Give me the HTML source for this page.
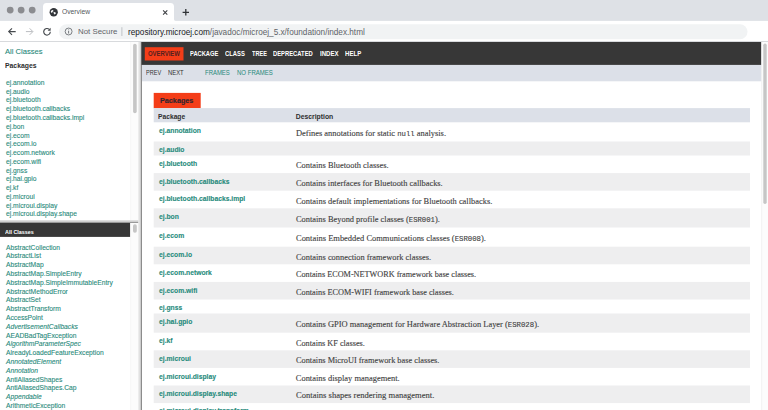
<!DOCTYPE html>
<html><head><meta charset="utf-8"><title>Overview</title>
<style>
*{box-sizing:border-box;margin:0;padding:0}
html,body{width:768px;height:410px;overflow:hidden;background:#fff}
.t{position:absolute;white-space:nowrap;line-height:1;transform-origin:0 0}
code{font-family:"Liberation Mono",monospace;font-size:0.865em}
svg{position:absolute;left:0;top:0}
</style></head><body>
<svg width="768" height="410" viewBox="0 0 768 410">
<rect x="0.00" y="0.00" width="768.00" height="20.90" fill="#dee1e6"/>
<path d="M41 20.9C43 20.9 43 19.4 43 18.4V6.5C43 4 44.5 2.9 46.5 2.9H170.5C172.5 2.9 174 4 174 6.5V18.4C174 19.4 174 20.9 176 20.9Z" fill="#fff"/>
<circle cx="10.2" cy="10.1" r="3.4" fill="#8b8c90"/>
<circle cx="21.15" cy="10.1" r="3.4" fill="#8b8c90"/>
<circle cx="32.2" cy="10.1" r="3.4" fill="#8b8c90"/>
<rect x="59.00" y="24.20" width="688.50" height="15.00" fill="#f1f3f4" rx="7.5"/>
<rect x="0.00" y="41.00" width="768.00" height="1.00" fill="#d8dadd"/>
<rect x="121.50" y="27.20" width="0.80" height="8.80" fill="#b4b7bb"/>
<rect x="130.60" y="42.00" width="7.80" height="178.00" fill="#fcfcfc"/>
<rect x="130.60" y="42.00" width="0.50" height="178.00" fill="#f0f0f0"/>
<rect x="133.10" y="43.70" width="3.60" height="69.50" fill="#c6c6c6" rx="1.8"/>
<rect x="0.00" y="220.00" width="138.40" height="1.70" fill="#e0e0e0"/>
<rect x="0.00" y="221.70" width="138.40" height="1.30" fill="#9a9a9a"/>
<rect x="0.00" y="223.00" width="130.20" height="13.90" fill="#373737"/>
<rect x="130.60" y="223.00" width="7.80" height="187.00" fill="#fcfcfc"/>
<rect x="130.60" y="223.00" width="0.50" height="187.00" fill="#f0f0f0"/>
<rect x="133.00" y="224.30" width="3.80" height="8.50" fill="#c6c6c6" rx="1.8"/>
<rect x="138.40" y="42.00" width="2.30" height="368.00" fill="#e2e2e2"/>
<rect x="140.70" y="42.00" width="1.30" height="368.00" fill="#8c8c8c"/>
<rect x="141.50" y="42.00" width="620.00" height="22.95" fill="#373737"/>
<rect x="144.80" y="47.20" width="38.70" height="13.30" fill="#f43d18"/>
<rect x="142.00" y="64.95" width="619.50" height="16.35" fill="#dce0e8"/>
<rect x="153.70" y="92.90" width="47.00" height="15.30" fill="#f43d18"/>
<rect x="153.70" y="108.10" width="596.30" height="14.20" fill="#dce0e8"/>
<rect x="153.70" y="141.50" width="596.30" height="14.00" fill="#eeeeef"/>
<rect x="153.70" y="173.10" width="596.30" height="17.60" fill="#eeeeef"/>
<rect x="153.70" y="208.30" width="596.30" height="19.20" fill="#eeeeef"/>
<rect x="153.70" y="246.70" width="596.30" height="17.60" fill="#eeeeef"/>
<rect x="153.70" y="281.90" width="596.30" height="17.60" fill="#eeeeef"/>
<rect x="153.70" y="313.50" width="596.30" height="19.20" fill="#eeeeef"/>
<rect x="153.70" y="350.30" width="596.30" height="17.60" fill="#eeeeef"/>
<rect x="153.70" y="385.50" width="596.30" height="17.60" fill="#eeeeef"/>
<rect x="761.50" y="42.00" width="6.50" height="368.00" fill="#fcfcfc"/>
<rect x="761.50" y="42.00" width="0.60" height="368.00" fill="#ececec"/>
<rect x="763.30" y="43.50" width="3.40" height="160.50" fill="#c6c6c6" rx="1.7"/>

<g transform="translate(49.4,7.95) scale(0.5375)"><circle cx="8" cy="8" r="7.7" fill="#33363a"/><path d="M2.6 7.4C2.6 5.4 4 3.8 5.6 3.6L7.4 4.6L7.2 6.4L5.6 7L5.4 8.6L3.6 9Z M8.2 7.6L10.6 8L12.2 9.6L11 11.4L9.2 12.2L8.6 10.4L7.6 9.2Z" fill="#fff"/></g>
<path transform="translate(162.2,9.5)" d="M0.9 0.9L5.1 5.1M5.1 0.9L0.9 5.1" stroke="#3a3d41" stroke-width="1.05" fill="none"/>
<path transform="translate(182.3,8.8)" d="M3.5 0.3V6.7M0.3 3.5H6.7" stroke="#303336" stroke-width="1.3" fill="none"/>
<path transform="translate(8,27.6)" d="M7.7 4H1M4 0.7L0.7 4L4 7.3" stroke="#464a4e" stroke-width="1.1" fill="none"/>
<path transform="translate(25.6,27.6)" d="M0.3 4H7M4 0.7L7.3 4L4 7.3" stroke="#babcc0" stroke-width="1" fill="none"/>
<g transform="translate(42.6,27.2)"><path d="M7.7 4.6A3.3 3.3 0 1 1 6.7 2.2" stroke="#464a4e" stroke-width="1.15" fill="none"/><path d="M8 0.6V3.6H5Z" fill="#464a4e"/></g>
<g transform="translate(64.6,27.5)"><circle cx="4" cy="4" r="3.45" stroke="#5f6368" stroke-width="0.8" fill="none"/><path d="M4 3.5V6M4 2V2.8" stroke="#5f6368" stroke-width="0.85"/></g>

</svg>
<div class="t" style="left:62.20px;top:9px;font-family:'Liberation Sans',sans-serif;font-size:6.95px;font-weight:normal;color:#53565a;transform:scaleX(0.9681);">Overview</div>
<div class="t" style="left:77.60px;top:28px;font-family:'Liberation Sans',sans-serif;font-size:7.85px;font-weight:normal;color:#5f6368;transform:scaleX(1.0038);">Not Secure</div>
<div class="t" style="left:128.40px;top:29px;font-family:'Liberation Sans',sans-serif;font-size:8.15px;font-weight:normal;color:#5f6368;transform:scaleX(1.0090);"><span style="color:#202124">repository.microej.com</span>/javadoc/microej_5.x/foundation/index.html</div>
<div class="t" style="left:5.00px;top:48px;font-family:'Liberation Sans',sans-serif;font-size:8.0px;font-weight:normal;color:#27897a;transform:scaleX(0.9500);-webkit-text-stroke:0.1px #27897a;">All Classes</div>
<div class="t" style="left:5.00px;top:62px;font-family:'Liberation Sans',sans-serif;font-size:7.0px;font-weight:bold;color:#2e2e2e;transform:scaleX(0.9779);">Packages</div>
<div class="t" style="left:5.60px;top:80px;font-family:'Liberation Sans',sans-serif;font-size:7.1px;font-weight:normal;color:#27897a;transform:scaleX(0.9450);-webkit-text-stroke:0.1px #27897a;">ej.annotation</div>
<div class="t" style="left:5.60px;top:89px;font-family:'Liberation Sans',sans-serif;font-size:7.1px;font-weight:normal;color:#27897a;transform:scaleX(0.9450);-webkit-text-stroke:0.1px #27897a;">ej.audio</div>
<div class="t" style="left:5.60px;top:97px;font-family:'Liberation Sans',sans-serif;font-size:7.1px;font-weight:normal;color:#27897a;transform:scaleX(0.9450);-webkit-text-stroke:0.1px #27897a;">ej.bluetooth</div>
<div class="t" style="left:5.60px;top:106px;font-family:'Liberation Sans',sans-serif;font-size:7.1px;font-weight:normal;color:#27897a;transform:scaleX(0.9450);-webkit-text-stroke:0.1px #27897a;">ej.bluetooth.callbacks</div>
<div class="t" style="left:5.60px;top:115px;font-family:'Liberation Sans',sans-serif;font-size:7.1px;font-weight:normal;color:#27897a;transform:scaleX(0.9450);-webkit-text-stroke:0.1px #27897a;">ej.bluetooth.callbacks.impl</div>
<div class="t" style="left:5.60px;top:124px;font-family:'Liberation Sans',sans-serif;font-size:7.1px;font-weight:normal;color:#27897a;transform:scaleX(0.9450);-webkit-text-stroke:0.1px #27897a;">ej.bon</div>
<div class="t" style="left:5.60px;top:133px;font-family:'Liberation Sans',sans-serif;font-size:7.1px;font-weight:normal;color:#27897a;transform:scaleX(0.9450);-webkit-text-stroke:0.1px #27897a;">ej.ecom</div>
<div class="t" style="left:5.60px;top:141px;font-family:'Liberation Sans',sans-serif;font-size:7.1px;font-weight:normal;color:#27897a;transform:scaleX(0.9450);-webkit-text-stroke:0.1px #27897a;">ej.ecom.io</div>
<div class="t" style="left:5.60px;top:150px;font-family:'Liberation Sans',sans-serif;font-size:7.1px;font-weight:normal;color:#27897a;transform:scaleX(0.9450);-webkit-text-stroke:0.1px #27897a;">ej.ecom.network</div>
<div class="t" style="left:5.60px;top:159px;font-family:'Liberation Sans',sans-serif;font-size:7.1px;font-weight:normal;color:#27897a;transform:scaleX(0.9450);-webkit-text-stroke:0.1px #27897a;">ej.ecom.wifi</div>
<div class="t" style="left:5.60px;top:168px;font-family:'Liberation Sans',sans-serif;font-size:7.1px;font-weight:normal;color:#27897a;transform:scaleX(0.9450);-webkit-text-stroke:0.1px #27897a;">ej.gnss</div>
<div class="t" style="left:5.60px;top:176px;font-family:'Liberation Sans',sans-serif;font-size:7.1px;font-weight:normal;color:#27897a;transform:scaleX(0.9450);-webkit-text-stroke:0.1px #27897a;">ej.hal.gpio</div>
<div class="t" style="left:5.60px;top:185px;font-family:'Liberation Sans',sans-serif;font-size:7.1px;font-weight:normal;color:#27897a;transform:scaleX(0.9450);-webkit-text-stroke:0.1px #27897a;">ej.kf</div>
<div class="t" style="left:5.60px;top:194px;font-family:'Liberation Sans',sans-serif;font-size:7.1px;font-weight:normal;color:#27897a;transform:scaleX(0.9450);-webkit-text-stroke:0.1px #27897a;">ej.microui</div>
<div class="t" style="left:5.60px;top:203px;font-family:'Liberation Sans',sans-serif;font-size:7.1px;font-weight:normal;color:#27897a;transform:scaleX(0.9450);-webkit-text-stroke:0.1px #27897a;">ej.microui.display</div>
<div class="t" style="left:5.60px;top:211px;font-family:'Liberation Sans',sans-serif;font-size:7.1px;font-weight:normal;color:#27897a;transform:scaleX(0.9450);-webkit-text-stroke:0.1px #27897a;">ej.microui.display.shape</div>
<div class="t" style="left:5.40px;top:229px;font-family:'Liberation Sans',sans-serif;font-size:6.0px;font-weight:bold;color:#fff;transform:scaleX(0.8991);">All Classes</div>
<div class="t" style="left:5.60px;top:245px;font-family:'Liberation Sans',sans-serif;font-size:7.1px;font-weight:normal;color:#27897a;transform:scaleX(0.9450);-webkit-text-stroke:0.1px #27897a;">AbstractCollection</div>
<div class="t" style="left:5.60px;top:253px;font-family:'Liberation Sans',sans-serif;font-size:7.1px;font-weight:normal;color:#27897a;transform:scaleX(0.9450);-webkit-text-stroke:0.1px #27897a;">AbstractList</div>
<div class="t" style="left:5.60px;top:262px;font-family:'Liberation Sans',sans-serif;font-size:7.1px;font-weight:normal;color:#27897a;transform:scaleX(0.9450);-webkit-text-stroke:0.1px #27897a;">AbstractMap</div>
<div class="t" style="left:5.60px;top:271px;font-family:'Liberation Sans',sans-serif;font-size:7.1px;font-weight:normal;color:#27897a;transform:scaleX(0.9450);-webkit-text-stroke:0.1px #27897a;">AbstractMap.SimpleEntry</div>
<div class="t" style="left:5.60px;top:280px;font-family:'Liberation Sans',sans-serif;font-size:7.1px;font-weight:normal;color:#27897a;transform:scaleX(0.9450);-webkit-text-stroke:0.1px #27897a;">AbstractMap.SimpleImmutableEntry</div>
<div class="t" style="left:5.60px;top:289px;font-family:'Liberation Sans',sans-serif;font-size:7.1px;font-weight:normal;color:#27897a;transform:scaleX(0.9450);-webkit-text-stroke:0.1px #27897a;">AbstractMethodError</div>
<div class="t" style="left:5.60px;top:297px;font-family:'Liberation Sans',sans-serif;font-size:7.1px;font-weight:normal;color:#27897a;transform:scaleX(0.9450);-webkit-text-stroke:0.1px #27897a;">AbstractSet</div>
<div class="t" style="left:5.60px;top:306px;font-family:'Liberation Sans',sans-serif;font-size:7.1px;font-weight:normal;color:#27897a;transform:scaleX(0.9450);-webkit-text-stroke:0.1px #27897a;">AbstractTransform</div>
<div class="t" style="left:5.60px;top:315px;font-family:'Liberation Sans',sans-serif;font-size:7.1px;font-weight:normal;color:#27897a;transform:scaleX(0.9450);-webkit-text-stroke:0.1px #27897a;">AccessPoint</div>
<div class="t" style="left:5.60px;top:324px;font-family:'Liberation Sans',sans-serif;font-size:7.1px;font-weight:normal;color:#27897a;transform:scaleX(0.9450);-webkit-text-stroke:0.1px #27897a;"><i>AdvertisementCallbacks</i></div>
<div class="t" style="left:5.60px;top:333px;font-family:'Liberation Sans',sans-serif;font-size:7.1px;font-weight:normal;color:#27897a;transform:scaleX(0.9450);-webkit-text-stroke:0.1px #27897a;">AEADBadTagException</div>
<div class="t" style="left:5.60px;top:341px;font-family:'Liberation Sans',sans-serif;font-size:7.1px;font-weight:normal;color:#27897a;transform:scaleX(0.9450);-webkit-text-stroke:0.1px #27897a;"><i>AlgorithmParameterSpec</i></div>
<div class="t" style="left:5.60px;top:350px;font-family:'Liberation Sans',sans-serif;font-size:7.1px;font-weight:normal;color:#27897a;transform:scaleX(0.9450);-webkit-text-stroke:0.1px #27897a;">AlreadyLoadedFeatureException</div>
<div class="t" style="left:5.60px;top:359px;font-family:'Liberation Sans',sans-serif;font-size:7.1px;font-weight:normal;color:#27897a;transform:scaleX(0.9450);-webkit-text-stroke:0.1px #27897a;"><i>AnnotatedElement</i></div>
<div class="t" style="left:5.60px;top:368px;font-family:'Liberation Sans',sans-serif;font-size:7.1px;font-weight:normal;color:#27897a;transform:scaleX(0.9450);-webkit-text-stroke:0.1px #27897a;"><i>Annotation</i></div>
<div class="t" style="left:5.60px;top:377px;font-family:'Liberation Sans',sans-serif;font-size:7.1px;font-weight:normal;color:#27897a;transform:scaleX(0.9450);-webkit-text-stroke:0.1px #27897a;">AntiAliasedShapes</div>
<div class="t" style="left:5.60px;top:385px;font-family:'Liberation Sans',sans-serif;font-size:7.1px;font-weight:normal;color:#27897a;transform:scaleX(0.9450);-webkit-text-stroke:0.1px #27897a;">AntiAliasedShapes.Cap</div>
<div class="t" style="left:5.60px;top:394px;font-family:'Liberation Sans',sans-serif;font-size:7.1px;font-weight:normal;color:#27897a;transform:scaleX(0.9450);-webkit-text-stroke:0.1px #27897a;"><i>Appendable</i></div>
<div class="t" style="left:5.60px;top:403px;font-family:'Liberation Sans',sans-serif;font-size:7.1px;font-weight:normal;color:#27897a;transform:scaleX(0.9450);-webkit-text-stroke:0.1px #27897a;">ArithmeticException</div>
<div class="t" style="left:148.10px;top:50px;font-family:'Liberation Sans',sans-serif;font-size:7.0px;font-weight:bold;color:#55201f;transform:scaleX(0.8482);">OVERVIEW</div>
<div class="t" style="left:189.80px;top:50px;font-family:'Liberation Sans',sans-serif;font-size:7.0px;font-weight:bold;color:#fff;transform:scaleX(0.8207);">PACKAGE</div>
<div class="t" style="left:224.60px;top:50px;font-family:'Liberation Sans',sans-serif;font-size:7.0px;font-weight:bold;color:#fff;transform:scaleX(0.8384);">CLASS</div>
<div class="t" style="left:251.70px;top:50px;font-family:'Liberation Sans',sans-serif;font-size:7.0px;font-weight:bold;color:#fff;transform:scaleX(0.7980);">TREE</div>
<div class="t" style="left:273.30px;top:50px;font-family:'Liberation Sans',sans-serif;font-size:7.0px;font-weight:bold;color:#fff;transform:scaleX(0.8341);">DEPRECATED</div>
<div class="t" style="left:320.00px;top:50px;font-family:'Liberation Sans',sans-serif;font-size:7.0px;font-weight:bold;color:#fff;transform:scaleX(0.8642);">INDEX</div>
<div class="t" style="left:345.00px;top:50px;font-family:'Liberation Sans',sans-serif;font-size:7.0px;font-weight:bold;color:#fff;transform:scaleX(0.8676);">HELP</div>
<div class="t" style="left:145.90px;top:69px;font-family:'Liberation Sans',sans-serif;font-size:7.0px;font-weight:normal;color:#333;transform:scaleX(0.7974);">PREV</div>
<div class="t" style="left:168.30px;top:69px;font-family:'Liberation Sans',sans-serif;font-size:7.0px;font-weight:normal;color:#333;transform:scaleX(0.8408);">NEXT</div>
<div class="t" style="left:205.00px;top:69px;font-family:'Liberation Sans',sans-serif;font-size:7.0px;font-weight:normal;color:#27897a;transform:scaleX(0.8501);">FRAMES</div>
<div class="t" style="left:237.00px;top:69px;font-family:'Liberation Sans',sans-serif;font-size:7.0px;font-weight:normal;color:#27897a;transform:scaleX(0.8601);">NO FRAMES</div>
<div class="t" style="left:160.30px;top:97px;font-family:'Liberation Sans',sans-serif;font-size:7.3px;font-weight:bold;color:#33252f;transform:scaleX(0.9915);-webkit-text-stroke:0.15px #33252f;">Packages</div>
<div class="t" style="left:157.80px;top:114px;font-family:'Liberation Sans',sans-serif;font-size:6.8px;font-weight:bold;color:#2e2e2e;transform:scaleX(0.9857);">Package</div>
<div class="t" style="left:295.80px;top:114px;font-family:'Liberation Sans',sans-serif;font-size:6.8px;font-weight:bold;color:#2e2e2e;">Description</div>
<div class="t" style="left:159.20px;top:127px;font-family:'Liberation Sans',sans-serif;font-size:7.0px;font-weight:bold;color:#258a7b;transform:scaleX(0.9640);-webkit-text-stroke:0.1px #258a7b;">ej.annotation</div>
<div class="t" style="left:295.80px;top:129px;font-family:'Liberation Serif',serif;font-size:8.45px;font-weight:normal;color:#404040;transform:scaleX(0.9990);-webkit-text-stroke:0.12px #404040;">Defines annotations for static <code>null</code> analysis.</div>
<div class="t" style="left:159.20px;top:146px;font-family:'Liberation Sans',sans-serif;font-size:7.0px;font-weight:bold;color:#258a7b;transform:scaleX(0.9640);-webkit-text-stroke:0.1px #258a7b;">ej.audio</div>
<div class="t" style="left:159.20px;top:160px;font-family:'Liberation Sans',sans-serif;font-size:7.0px;font-weight:bold;color:#258a7b;transform:scaleX(0.9640);-webkit-text-stroke:0.1px #258a7b;">ej.bluetooth</div>
<div class="t" style="left:295.80px;top:161px;font-family:'Liberation Serif',serif;font-size:8.45px;font-weight:normal;color:#404040;transform:scaleX(0.9941);-webkit-text-stroke:0.12px #404040;">Contains Bluetooth classes.</div>
<div class="t" style="left:159.20px;top:178px;font-family:'Liberation Sans',sans-serif;font-size:7.0px;font-weight:bold;color:#258a7b;transform:scaleX(0.9640);-webkit-text-stroke:0.1px #258a7b;">ej.bluetooth.callbacks</div>
<div class="t" style="left:295.80px;top:179px;font-family:'Liberation Serif',serif;font-size:8.45px;font-weight:normal;color:#404040;transform:scaleX(0.9922);-webkit-text-stroke:0.12px #404040;">Contains interfaces for Bluetooth callbacks.</div>
<div class="t" style="left:159.20px;top:195px;font-family:'Liberation Sans',sans-serif;font-size:7.0px;font-weight:bold;color:#258a7b;transform:scaleX(0.9640);-webkit-text-stroke:0.1px #258a7b;">ej.bluetooth.callbacks.impl</div>
<div class="t" style="left:295.80px;top:197px;font-family:'Liberation Serif',serif;font-size:8.45px;font-weight:normal;color:#404040;transform:scaleX(0.9972);-webkit-text-stroke:0.12px #404040;">Contains default implementations for Bluetooth callbacks.</div>
<div class="t" style="left:159.20px;top:213px;font-family:'Liberation Sans',sans-serif;font-size:7.0px;font-weight:bold;color:#258a7b;transform:scaleX(0.9640);-webkit-text-stroke:0.1px #258a7b;">ej.bon</div>
<div class="t" style="left:295.80px;top:215px;font-family:'Liberation Serif',serif;font-size:8.45px;font-weight:normal;color:#404040;transform:scaleX(0.9943);-webkit-text-stroke:0.12px #404040;">Contains Beyond profile classes (<code>ESR001</code>).</div>
<div class="t" style="left:159.20px;top:232px;font-family:'Liberation Sans',sans-serif;font-size:7.0px;font-weight:bold;color:#258a7b;transform:scaleX(0.9640);-webkit-text-stroke:0.1px #258a7b;">ej.ecom</div>
<div class="t" style="left:295.80px;top:234px;font-family:'Liberation Serif',serif;font-size:8.45px;font-weight:normal;color:#404040;transform:scaleX(1.0015);-webkit-text-stroke:0.12px #404040;">Contains Embedded Communications classes (<code>ESR008</code>).</div>
<div class="t" style="left:159.20px;top:251px;font-family:'Liberation Sans',sans-serif;font-size:7.0px;font-weight:bold;color:#258a7b;transform:scaleX(0.9640);-webkit-text-stroke:0.1px #258a7b;">ej.ecom.io</div>
<div class="t" style="left:295.80px;top:253px;font-family:'Liberation Serif',serif;font-size:8.45px;font-weight:normal;color:#404040;transform:scaleX(0.9933);-webkit-text-stroke:0.12px #404040;">Contains connection framework classes.</div>
<div class="t" style="left:159.20px;top:269px;font-family:'Liberation Sans',sans-serif;font-size:7.0px;font-weight:bold;color:#258a7b;transform:scaleX(0.9640);-webkit-text-stroke:0.1px #258a7b;">ej.ecom.network</div>
<div class="t" style="left:295.80px;top:270px;font-family:'Liberation Serif',serif;font-size:8.45px;font-weight:normal;color:#404040;transform:scaleX(0.9716);-webkit-text-stroke:0.12px #404040;">Contains ECOM-NETWORK framework base classes.</div>
<div class="t" style="left:159.20px;top:287px;font-family:'Liberation Sans',sans-serif;font-size:7.0px;font-weight:bold;color:#258a7b;transform:scaleX(0.9640);-webkit-text-stroke:0.1px #258a7b;">ej.ecom.wifi</div>
<div class="t" style="left:295.80px;top:288px;font-family:'Liberation Serif',serif;font-size:8.45px;font-weight:normal;color:#404040;transform:scaleX(0.9780);-webkit-text-stroke:0.12px #404040;">Contains ECOM-WIFI framework base classes.</div>
<div class="t" style="left:159.20px;top:304px;font-family:'Liberation Sans',sans-serif;font-size:7.0px;font-weight:bold;color:#258a7b;transform:scaleX(0.9640);-webkit-text-stroke:0.1px #258a7b;">ej.gnss</div>
<div class="t" style="left:159.20px;top:318px;font-family:'Liberation Sans',sans-serif;font-size:7.0px;font-weight:bold;color:#258a7b;transform:scaleX(0.9640);-webkit-text-stroke:0.1px #258a7b;">ej.hal.gpio</div>
<div class="t" style="left:295.80px;top:320px;font-family:'Liberation Serif',serif;font-size:8.45px;font-weight:normal;color:#404040;-webkit-text-stroke:0.12px #404040;">Contains GPIO management for Hardware Abstraction Layer (<code>ESR028</code>).</div>
<div class="t" style="left:159.20px;top:337px;font-family:'Liberation Sans',sans-serif;font-size:7.0px;font-weight:bold;color:#258a7b;transform:scaleX(0.9640);-webkit-text-stroke:0.1px #258a7b;">ej.kf</div>
<div class="t" style="left:295.80px;top:339px;font-family:'Liberation Serif',serif;font-size:8.45px;font-weight:normal;color:#404040;transform:scaleX(0.9752);-webkit-text-stroke:0.12px #404040;">Contains KF classes.</div>
<div class="t" style="left:159.20px;top:355px;font-family:'Liberation Sans',sans-serif;font-size:7.0px;font-weight:bold;color:#258a7b;transform:scaleX(0.9640);-webkit-text-stroke:0.1px #258a7b;">ej.microui</div>
<div class="t" style="left:295.80px;top:356px;font-family:'Liberation Serif',serif;font-size:8.45px;font-weight:normal;color:#404040;transform:scaleX(0.9855);-webkit-text-stroke:0.12px #404040;">Contains MicroUI framework base classes.</div>
<div class="t" style="left:159.20px;top:373px;font-family:'Liberation Sans',sans-serif;font-size:7.0px;font-weight:bold;color:#258a7b;transform:scaleX(0.9640);-webkit-text-stroke:0.1px #258a7b;">ej.microui.display</div>
<div class="t" style="left:295.80px;top:374px;font-family:'Liberation Serif',serif;font-size:8.45px;font-weight:normal;color:#404040;-webkit-text-stroke:0.12px #404040;">Contains display management.</div>
<div class="t" style="left:159.20px;top:390px;font-family:'Liberation Sans',sans-serif;font-size:7.0px;font-weight:bold;color:#258a7b;transform:scaleX(0.9640);-webkit-text-stroke:0.1px #258a7b;">ej.microui.display.shape</div>
<div class="t" style="left:295.80px;top:391px;font-family:'Liberation Serif',serif;font-size:8.45px;font-weight:normal;color:#404040;transform:scaleX(1.0148);-webkit-text-stroke:0.12px #404040;">Contains shapes rendering management.</div>
<div class="t" style="left:159.20px;top:407px;font-family:'Liberation Sans',sans-serif;font-size:7.0px;font-weight:bold;color:#258a7b;transform:scaleX(0.9640);-webkit-text-stroke:0.1px #258a7b;">ej.microui.display.transform</div>
<div class="t" style="left:295.80px;top:409px;font-family:'Liberation Serif',serif;font-size:8.45px;font-weight:normal;color:#404040;-webkit-text-stroke:0.12px #404040;">Contains display transformation management.</div>
</body></html>
